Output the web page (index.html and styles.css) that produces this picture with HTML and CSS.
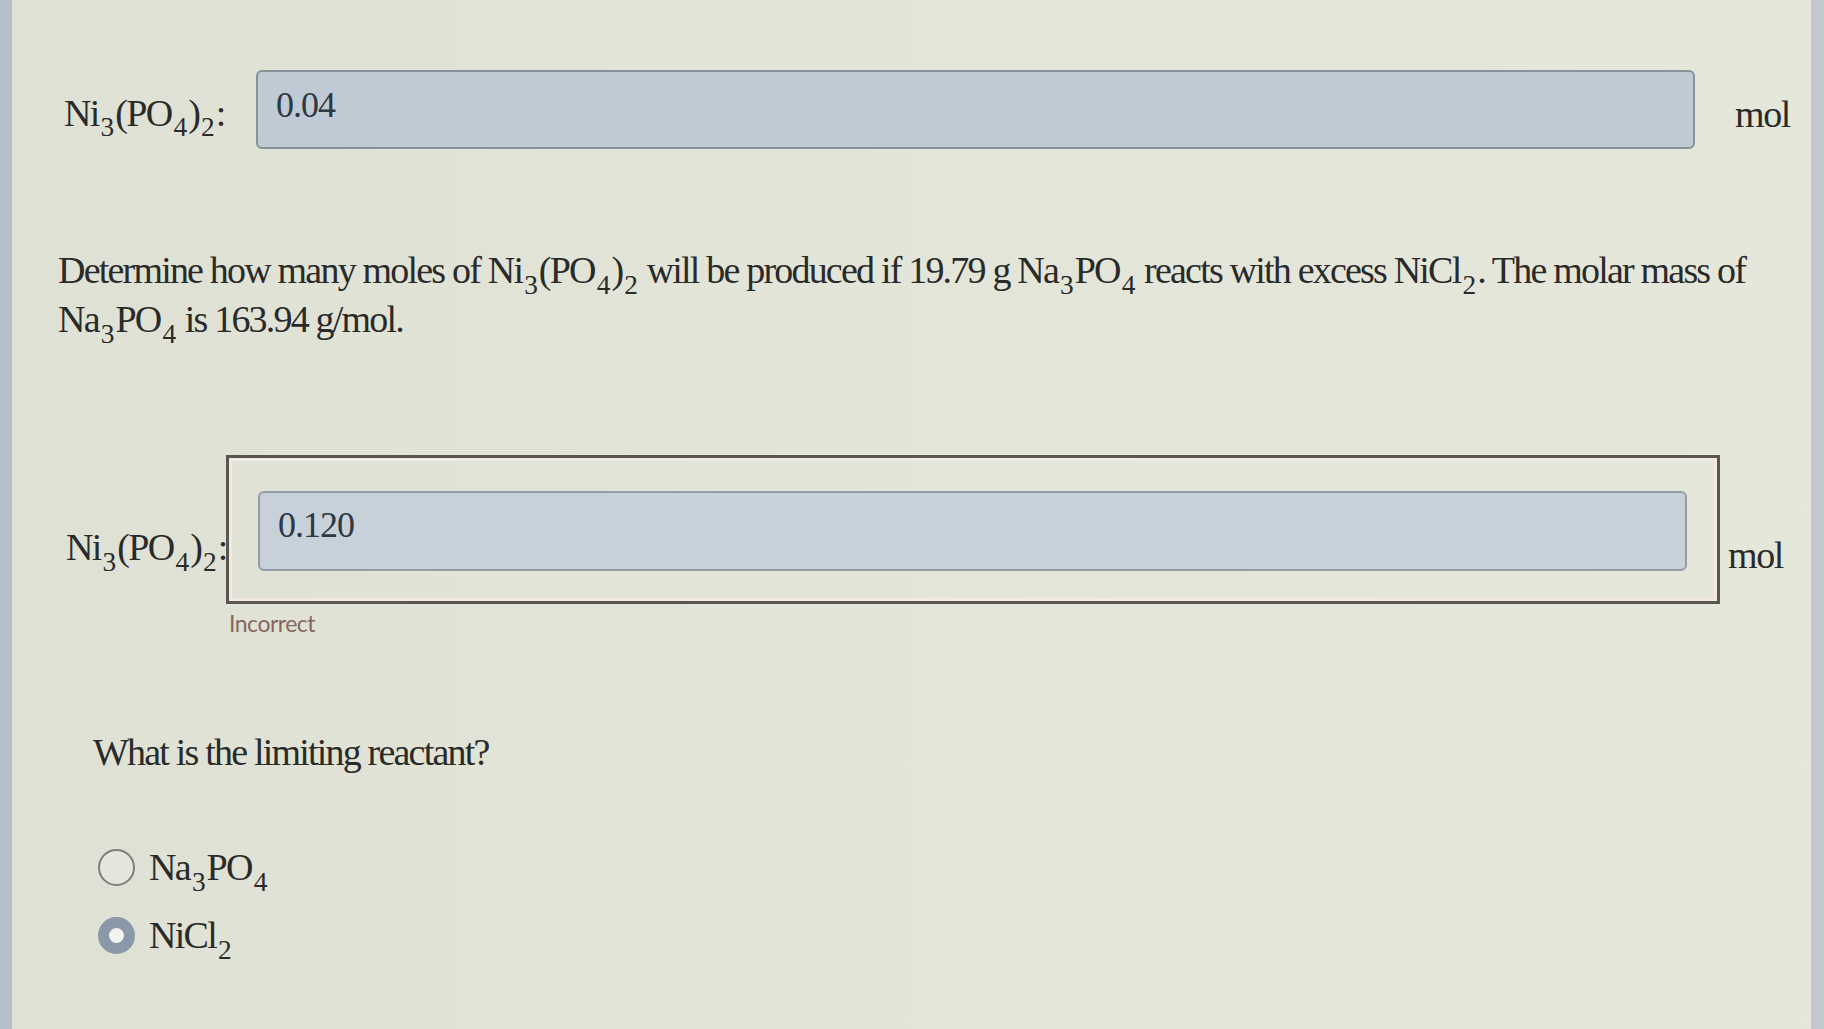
FILE: index.html
```html
<!DOCTYPE html>
<html>
<head>
<meta charset="utf-8">
<link rel="stylesheet" href="styles.css">
</head>
<body>
<div class="screen">
  <div class="content">
    <div class="row row-first">
      <div class="label">Ni<sub>3</sub>(PO<sub>4</sub>)<sub>2</sub>:</div>
      <div class="input input-first">0.04</div>
      <div class="unit">mol</div>
    </div>

    <p class="question">Determine how many moles of Ni<sub>3</sub>(PO<sub>4</sub>)<sub>2</sub> will be produced if 19.79 g Na<sub>3</sub>PO<sub>4</sub> reacts with excess NiCl<sub>2</sub>. The molar mass of Na<sub>3</sub>PO<sub>4</sub> is 163.94 g/mol.</p>

    <div class="row row-second">
      <div class="label label-second">Ni<sub>3</sub>(PO<sub>4</sub>)<sub>2</sub>:</div>
      <div class="wrong-box">
        <div class="input input-second">0.120</div>
      </div>
      <div class="unit unit-second">mol</div>
    </div>
    <div class="feedback">Incorrect</div>

    <p class="limiting">What is the limiting reactant?</p>

    <div class="options">
      <div class="option"><span class="radio"></span><span class="opt-text">Na<sub>3</sub>PO<sub>4</sub></span></div>
      <div class="option"><span class="radio radio-on"></span><span class="opt-text">NiCl<sub>2</sub></span></div>
    </div>
  </div>
</div>
</body>
</html>
```

FILE: styles.css
```css
html, body {
  margin: 0;
  padding: 0;
}
body {
  width: 1824px;
  height: 1029px;
  overflow: hidden;
  background: #e0e3d5;
  font-family: "Liberation Serif", "Times New Roman", serif;
  color: #2b2b2b;
}
.screen {
  height: 1029px;
  box-sizing: border-box;
  border-left: 12px solid #b6bfca;
  border-right: 13px solid #c3cacf;
  background: linear-gradient(90deg, #dee1d3 0%, #e2e5d7 50%, #e5e7da 100%);
}
.content {
  padding-top: 70px;
}
sub {
  font-size: 0.72em;
  vertical-align: -0.4em;
  line-height: 0;
  letter-spacing: 0;
  margin-left: 2px;
  margin-right: 1px;
}
.row {
  display: flex;
  align-items: center;
}
.label {
  font-size: 38px;
  letter-spacing: -1.7px;
  padding-left: 52px;
  width: 192px;
  box-sizing: border-box;
  color: #2a2a2a;
}
.row-first .label {
  width: 244px;
  padding-top: 6px;
}
.input {
  box-sizing: border-box;
  height: 79px;
  background: #bfcad4;
  border: 2px solid #86929b;
  border-radius: 6px;
  font-size: 36px;
  letter-spacing: -1px;
  color: #2c3844;
  padding: 12px 0 0 18px;
}
.input-first {
  width: 1439px;
}
.unit {
  font-size: 38px;
  letter-spacing: -1.4px;
  margin-left: 40px;
  padding-top: 9px;
  color: #2a2a2a;
}
.question {
  margin: 97px 0 0 46px;
  font-size: 38px;
  line-height: 49px;
  letter-spacing: -1.8px;
  width: 1700px;
  color: #2a2a2a;
}
.row-second {
  margin-top: 111px;
  align-items: flex-start;
}
.label-second {
  width: 214px;
  padding-left: 54px;
  padding-top: 70px;
}
.wrong-box {
  box-sizing: border-box;
  width: 1494px;
  height: 149px;
  border: 3px solid #5c5650;
  box-shadow: inset 0 0 0 3px #f3e9e3;
  padding: 33px 30px 0 29px;
}
.input-second {
  width: 100%;
  height: 80px;
  background: #c7d1d9;
  border-color: #929da5;
  padding-top: 11px;
  padding-left: 18px;
}
.unit-second {
  margin-left: 8px;
  padding-top: 78px;
}
.feedback {
  margin: 5px 0 0 217px;
  font-family: Lato, "Open Sans", sans-serif;
  font-size: 23px;
  color: #87675f;
  letter-spacing: -0.5px;
}
.limiting {
  margin: 93px 0 0 81px;
  font-size: 38px;
  letter-spacing: -1.8px;
  color: #2a2a2a;
}
.options {
  margin: 75px 0 0 86px;
  display: flex;
  flex-direction: column;
  gap: 32px;
}
.option {
  display: flex;
  align-items: center;
  gap: 14px;
  height: 36px;
}
.radio {
  box-sizing: border-box;
  width: 37px;
  height: 37px;
  border-radius: 50%;
  border: 2px solid #7d7f7d;
  background: #e4e6dc;
}
.radio-on {
  border: 11px solid #8b98a9;
  background: #f2f3ef;
}
.opt-text {
  font-size: 38px;
  letter-spacing: -1.7px;
  color: #2a2a2a;
}
```
